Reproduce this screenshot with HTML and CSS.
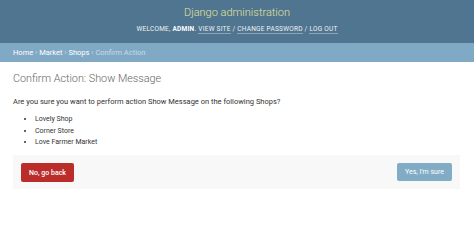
FILE: index.html
```html
<!DOCTYPE html>
<html lang="en">
<head>
<meta charset="utf-8">
<title>Confirm Action | Django site admin</title>
<link rel="stylesheet" href="styles.css">
</head>
<body>
<div class="header">
  <div class="branding">Django administration</div>
  <div class="user-tools">WELCOME, <strong>ADMIN</strong>. <a href="#">VIEW SITE</a> / <a href="#">CHANGE PASSWORD</a> / <a href="#">LOG OUT</a></div>
</div>
<div class="breadcrumbs"><a href="#">Home</a> › <a href="#">Market</a> › <a href="#">Shops</a> › <span class="current">Confirm Action</span></div>
<div class="content">
  <h1 class="title">Confirm Action: Show Message</h1>
  <p class="question">Are you sure you want to perform action Show Message on the following Shops?</p>
  <ul class="items">
    <li>Lovely Shop</li>
    <li>Corner Store</li>
    <li>Love Farmer Market</li>
  </ul>
  <div class="submit-row">
    <a href="#" class="btn btn-back">No, go back</a>
    <a href="#" class="btn btn-yes">Yes, I'm sure</a>
  </div>
</div>
</body>
</html>
```

FILE: styles.css
```css
html, body {
  margin: 0;
  padding: 0;
  background: #fff;
  font-family: Roboto, "Liberation Sans", sans-serif;
  color: #333;
}
.header {
  background: #4f7590;
  height: 43px;
  box-sizing: border-box;
  padding-top: 5px;
  text-align: center;
}
.branding {
  color: #e3e29a;
  font-size: 11px;
  font-weight: 300;
  line-height: 16px;
}
.user-tools {
  margin-top: 2px;
  color: #f2f2f2;
  font-size: 6.5px;
  font-weight: 400;
  letter-spacing: 0.25px;
  line-height: 12px;
}
.user-tools strong {
  font-weight: 700;
  color: #fff;
}
.user-tools a {
  color: #f2f2f2;
  text-decoration: none;
  border-bottom: 1px solid rgba(255,255,255,0.35);
}
.breadcrumbs {
  background: #7fa9c5;
  height: 19px;
  line-height: 19px;
  padding-left: 13px;
  font-size: 7.5px;
  color: #c8dce8;
}
.breadcrumbs a {
  color: #fff;
  text-decoration: none;
}
.breadcrumbs .current {
  color: #c8dce8;
}
.content {
  padding: 0 14px 0 13px;
}
.title {
  margin: 9px 0 0;
  font-size: 10.8px;
  font-weight: 300;
  color: #666;
  line-height: 16px;
}
.question {
  margin: 9px 0 0;
  font-size: 7.5px;
  line-height: 12px;
  color: #333;
}
.items {
  margin: 6px 0 0;
  padding-left: 22px;
  font-size: 7px;
  line-height: 11.5px;
  color: #333;
}
.submit-row {
  margin-top: 6px;
  background: #f8f8f8;
  height: 34px;
  box-sizing: border-box;
  padding: 0 8px;
  display: flex;
  justify-content: space-between;
  align-items: center;
}
.btn {
  font-size: 7px;
  color: #fff;
  text-decoration: none;
  border-radius: 2px;
  display: flex;
  align-items: center;
  justify-content: center;
}
.btn-back {
  background: #ba2d2b;
  width: 53px;
  height: 19px;
  margin-top: 2px;
  font-weight: 500;
}
.btn-yes {
  background: #82abc6;
  width: 55px;
  height: 18px;
}
```
